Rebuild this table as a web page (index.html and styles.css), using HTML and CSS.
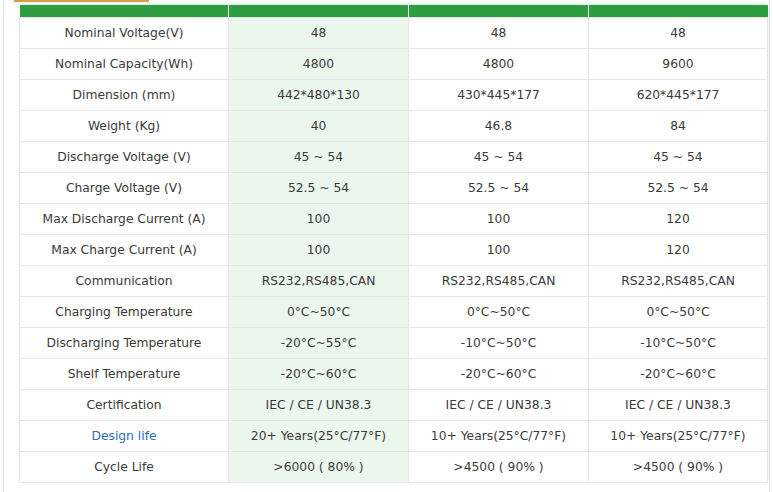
FILE: index.html
```html
<!DOCTYPE html>
<html>
<head>
<meta charset="utf-8">
<link rel="stylesheet" href="styles.css">
</head>
<body>
<div class="frame">
  <div class="accent"></div>
  <div class="wrap">
    <table class="spec">
      <colgroup>
        <col class="c1"><col class="c2"><col class="c3"><col class="c4">
      </colgroup>
      <thead>
        <tr><th></th><th></th><th></th><th></th></tr>
      </thead>
      <tbody>
        <tr><td>Nominal Voltage(V)</td><td class="hl">48</td><td>48</td><td>48</td></tr>
        <tr><td>Nominal Capacity(Wh)</td><td class="hl">4800</td><td>4800</td><td>9600</td></tr>
        <tr><td>Dimension (mm)</td><td class="hl">442*480*130</td><td>430*445*177</td><td>620*445*177</td></tr>
        <tr><td>Weight (Kg)</td><td class="hl">40</td><td>46.8</td><td>84</td></tr>
        <tr><td>Discharge Voltage (V)</td><td class="hl">45 ~ 54</td><td>45 ~ 54</td><td>45 ~ 54</td></tr>
        <tr><td>Charge Voltage (V)</td><td class="hl">52.5 ~ 54</td><td>52.5 ~ 54</td><td>52.5 ~ 54</td></tr>
        <tr><td>Max Discharge Current (A)</td><td class="hl">100</td><td>100</td><td>120</td></tr>
        <tr><td>Max Charge Current (A)</td><td class="hl">100</td><td>100</td><td>120</td></tr>
        <tr><td>Communication</td><td class="hl">RS232,RS485,CAN</td><td>RS232,RS485,CAN</td><td>RS232,RS485,CAN</td></tr>
        <tr><td>Charging Temperature</td><td class="hl">0°C~50°C</td><td>0°C~50°C</td><td>0°C~50°C</td></tr>
        <tr><td>Discharging Temperature</td><td class="hl">-20°C~55°C</td><td>-10°C~50°C</td><td>-10°C~50°C</td></tr>
        <tr><td>Shelf Temperature</td><td class="hl">-20°C~60°C</td><td>-20°C~60°C</td><td>-20°C~60°C</td></tr>
        <tr><td>Certification</td><td class="hl">IEC / CE / UN38.3</td><td>IEC / CE / UN38.3</td><td>IEC / CE / UN38.3</td></tr>
        <tr><td class="link">Design life</td><td class="hl">20+ Years(25°C/77°F)</td><td>10+ Years(25°C/77°F)</td><td>10+ Years(25°C/77°F)</td></tr>
        <tr><td>Cycle Life</td><td class="hl">&gt;6000 ( 80% )</td><td>&gt;4500 ( 90% )</td><td>&gt;4500 ( 90% )</td></tr>
      </tbody>
    </table>
  </div>
</div>
</body>
</html>
```
FILE: styles.css
```css
html, body {
  margin: 0;
  padding: 0;
  background: #ffffff;
}
body {
  font-family: "DejaVu Sans", Verdana, sans-serif;
  font-size: 12.3px;
  color: #3a3a3a;
}
.frame {
  position: relative;
  margin-left: 3px;
  width: 767px;
  height: 492px;
  border-left: 1px solid #e2e2e2;
  border-right: 1px solid #e2e2e2;
  box-sizing: border-box;
}
.accent {
  position: absolute;
  left: 10px;
  top: 0;
  width: 135px;
  height: 2px;
  background: #d99a4e;
}
.wrap {
  padding: 5px 0 0 15px;
}
.spec {
  border-collapse: collapse;
  width: 748px;
  table-layout: fixed;
  box-shadow: 0 -2px 3px rgba(120, 200, 130, 0.25);
}
.c1 { width: 209px; }
.c2 { width: 180px; }
.c3 { width: 180px; }
.c4 { width: 179px; }
.spec th {
  height: 12px;
  padding: 0;
  background: #2e9d42;
  border-left: 1px solid #e8f5e8;
}
.spec th:first-child {
  border-left: none;
}
.spec td {
  height: 30px;
  padding: 0;
  text-align: center;
  vertical-align: middle;
  border: 1px solid #e6e6e6;
  white-space: nowrap;
}
.spec td.hl {
  background: #ebf7ec;
}
.spec td.link {
  color: #2a6fb5;
}
```
